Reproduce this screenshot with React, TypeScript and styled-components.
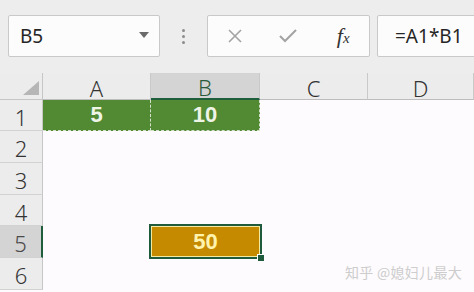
import React from 'react';
import styled, { createGlobalStyle } from 'styled-components';

const GlobalStyle = createGlobalStyle`
  html, body {
    margin: 0;
    padding: 0;
    background: #fdfbfd;
  }
  * {
    box-sizing: border-box;
  }
`;

const Page = styled.div`
  width: 474px;
  height: 292px;
  overflow: hidden;
  position: relative;
  background: #fdfbfd;
  font-family: "Noto Sans", "Open Sans", sans-serif;
`;

const Toolbar = styled.div`
  height: 73px;
  background: #eeedee;
  display: flex;
  align-items: flex-start;
  padding: 15px 0 0 8px;
`;

const Box = styled.div`
  height: 42px;
  background: #fcfcfc;
  border: 1px solid #c9c9c9;
  border-radius: 2px;
  display: flex;
  align-items: center;
`;

const NameBox = styled(Box)`
  width: 152px;
  justify-content: space-between;
  padding: 0 10px 0 11px;
  font-size: 19px;
  color: #262626;
`;

const Caret = styled.span`
  width: 0;
  height: 0;
  border-left: 5px solid transparent;
  border-right: 5px solid transparent;
  border-top: 6px solid #6a6a6a;
  margin-top: -2px;
`;

const Dots = styled.div`
  width: 47px;
  height: 42px;
  display: flex;
  flex-direction: column;
  align-items: center;
  justify-content: center;
  gap: 3px;

  span {
    width: 3px;
    height: 3px;
    border-radius: 50%;
    background: #8c8c8c;
  }
`;

const FxBox = styled(Box)`
  width: 163px;
  display: grid;
  grid-template-columns: repeat(3, 1fr);
  justify-items: center;
`;

const FxLabel = styled.span`
  font-family: "Liberation Serif", "DejaVu Serif", serif;
  font-style: italic;
  font-size: 22px;
  color: #333;
  margin-left: 2px;

  small {
    font-size: 15px;
  }
`;

const FormulaBox = styled(Box)`
  flex: 1;
  margin-left: 7px;
  margin-right: -10px;
  padding-left: 17px;
  font-size: 19px;
  color: #262626;
`;

const Sheet = styled.div`
  display: grid;
  grid-template-columns: 43px 108px 109px 108px 1fr;
  grid-template-rows: 27px 31px 32px 32px 31px 32px 32px;
`;

const Corner = styled.div`
  background: #ececec;
  border-right: 1px solid #c6c6c6;
  border-bottom: 1px solid #c6c6c6;
  display: flex;
  align-items: flex-end;
  justify-content: flex-end;
  padding: 0 3px 4px 0;

  &::after {
    content: "";
    width: 0;
    height: 0;
    border-left: 16px solid transparent;
    border-bottom: 14px solid #b6b6b6;
  }
`;

const ColHeader = styled.div<{ $active?: boolean }>`
  background: ${({ $active }) => ($active ? '#d4d4d4' : '#ececec')};
  border-right: 1px solid #c9c9c9;
  border-bottom: ${({ $active }) => ($active ? '2px solid #1f5e3c' : '1px solid #bdbdbd')};
  display: flex;
  align-items: center;
  justify-content: center;
  font-size: 22px;
  font-weight: 300;
  color: ${({ $active }) => ($active ? '#2b5a3c' : '#333')};
  padding-top: 3px;
`;

const RowHeader = styled.div<{ $active?: boolean }>`
  background: ${({ $active }) => ($active ? '#d4d4d4' : '#ececec')};
  border-right: ${({ $active }) => ($active ? '2px solid #1f5e3c' : '1px solid #c6c6c6')};
  border-bottom: 1px solid #d2d2d2;
  display: flex;
  align-items: center;
  justify-content: center;
  font-size: 22px;
  font-weight: 300;
  color: ${({ $active }) => ($active ? '#4a4a4a' : '#333')};
  padding-top: 3px;
`;

const Cell = styled.div<{ $fill?: string; $ink?: string; $copied?: boolean }>`
  position: relative;
  background: ${({ $fill }) => $fill || 'transparent'};
  color: ${({ $ink }) => $ink || '#222'};
  font-family: "Liberation Sans", Arial, sans-serif;
  font-weight: bold;
  font-size: 22px;
  display: flex;
  align-items: center;
  justify-content: center;
  ${({ $copied }) =>
    $copied &&
    `
    border-right: 1px dashed rgba(255, 255, 255, 0.75);
    border-bottom: 1px dashed rgba(255, 255, 255, 0.75);
  `}
`;

const Selection = styled.div`
  position: absolute;
  inset: -2px -2px -1px -2px;
  border: 2px solid #1f5a3c;
  box-shadow: inset 0 0 0 1px #f4eba2;
  pointer-events: none;
`;

const FillHandle = styled.div`
  position: absolute;
  right: -5px;
  bottom: -5px;
  width: 8px;
  height: 8px;
  background: #1f5a3c;
  border: 1px solid #fdfbfd;
`;

const Watermark = styled.div`
  position: absolute;
  right: 12px;
  bottom: 10px;
  font-family: "Noto Sans CJK SC", "Noto Sans", sans-serif;
  font-size: 14px;
  color: #cdcdcd;
  letter-spacing: 0.3px;
`;

const CloseIcon = () => (
  <svg width="16" height="16" viewBox="0 0 16 16">
    <path d="M2 2 L14 14 M14 2 L2 14" stroke="#a3a3a3" strokeWidth="1.6" fill="none" />
  </svg>
);

const CheckIcon = () => (
  <svg width="20" height="16" viewBox="0 0 20 16">
    <path d="M2 8 L7 13 L18 2" stroke="#a3a3a3" strokeWidth="2" fill="none" />
  </svg>
);

const columns = ['A', 'B', 'C', 'D'];

const values: Record<string, { text: string; fill: string; ink: string; copied?: boolean }> = {
  A1: { text: '5', fill: '#528933', ink: '#eef4e6', copied: true },
  B1: { text: '10', fill: '#528933', ink: '#eef4e6', copied: true },
  B5: { text: '50', fill: '#c68a00', ink: '#fff3ad' },
};

const App: React.FC = () => {
  return (
    <Page>
      <GlobalStyle />
      <Toolbar>
        <NameBox>
          B5
          <Caret />
        </NameBox>
        <Dots>
          <span />
          <span />
          <span />
        </Dots>
        <FxBox>
          <CloseIcon />
          <CheckIcon />
          <FxLabel>
            f<small>x</small>
          </FxLabel>
        </FxBox>
        <FormulaBox>=A1*B1</FormulaBox>
      </Toolbar>

      <Sheet>
        <Corner />
        {columns.map((c) => (
          <ColHeader key={c} $active={c === 'B'}>
            {c}
          </ColHeader>
        ))}
        {[1, 2, 3, 4, 5, 6].map((row) => (
          <React.Fragment key={row}>
            <RowHeader $active={row === 5}>{row}</RowHeader>
            {columns.map((c) => {
              const id = `${c}${row}`;
              const v = values[id];
              return (
                <Cell key={id} $fill={v?.fill} $ink={v?.ink} $copied={v?.copied}>
                  {v?.text}
                  {id === 'B5' && (
                    <Selection>
                      <FillHandle />
                    </Selection>
                  )}
                </Cell>
              );
            })}
          </React.Fragment>
        ))}
      </Sheet>

      <Watermark>知乎 @媳妇儿最大</Watermark>
    </Page>
  );
};

export default App;
